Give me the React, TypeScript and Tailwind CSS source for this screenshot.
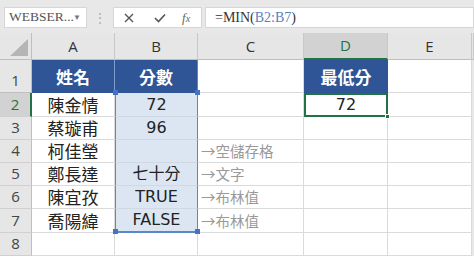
import React from "react";

const CJK = "font-['Noto_Sans_CJK_TC','Noto_Sans',sans-serif]";

const rows = [
  { n: "2", a: "陳金情", b: "72", c: "" },
  { n: "3", a: "蔡璇甫", b: "96", c: "" },
  { n: "4", a: "柯佳瑩", b: "", c: "→空儲存格" },
  { n: "5", a: "鄭長達", b: "七十分", c: "→文字" },
  { n: "6", a: "陳宜孜", b: "TRUE", c: "→布林值" },
  { n: "7", a: "喬陽緯", b: "FALSE", c: "→布林值" },
];

const rowH = ["h-[24px]", "h-[23px]", "h-[23px]", "h-[23px]", "h-[23px]", "h-[24px]"];

function RowHead({ n, active, h }: { n: string; active?: boolean; h: string }) {
  return (
    <div
      className={`${h} flex items-end justify-center pb-[1px] border-b border-[#d0d0d0] text-[15px] font-['Open_Sans',sans-serif] ${
        active ? "bg-[#d2d2d2] text-[#217346] border-r-2 border-r-[#217346]" : "bg-[#e6e6e6] text-[#444] border-r border-r-[#bfbfbf]"
      }`}
    >
      {n}
    </div>
  );
}

export default function App() {
  return (
    <div className="w-[474px] h-[259px] overflow-hidden bg-white">
      {/* formula bar */}
      <div className="h-[33px] bg-[#e8e8e8] flex items-start pt-[7px]">
        <div className="ml-[4px] w-[83px] h-[21px] bg-white border border-[#d6d6d6] flex items-center pl-[4px] relative">
          <span className="text-[13.5px] text-[#555] font-['Liberation_Serif',serif]">WEBSER...</span>
          <span className="absolute right-[5px] top-[3px] text-[8px] text-[#777]">▼</span>
        </div>
        <div className="w-[26px] h-[21px] flex items-center justify-center text-[#aaa] text-[12px]">⋮</div>
        <div className="w-[89px] h-[21px] bg-white border border-[#d6d6d6] flex items-center">
          <svg className="ml-[10px]" width="10" height="10" viewBox="0 0 10 10">
            <path d="M1 1 L9 9 M9 1 L1 9" stroke="#555" strokeWidth="1.4" />
          </svg>
          <svg className="ml-[20px]" width="12" height="10" viewBox="0 0 12 10">
            <path d="M1 5 L4.5 8.5 L11 1.5" stroke="#555" strokeWidth="1.6" fill="none" />
          </svg>
          <span className="ml-[16px] text-[13px] italic text-[#666] font-['Liberation_Serif',serif]">
            f<span className="text-[10px]">x</span>
          </span>
        </div>
        <div className="ml-[3px] flex-1 h-[21px] bg-white border border-[#d6d6d6] flex items-center pl-[9px] text-[14px] font-['Liberation_Serif',serif] text-[#333]">
          =MIN(<span className="text-[#5b7fc0]">B2:B7</span>)
        </div>
      </div>

      {/* sheet grid */}
      <div className="grid grid-cols-[32px_83px_83px_106px_84px_84px_1fr]">
        {/* column headers */}
        <div className="h-[27px] bg-[#e6e6e6] border-r border-b border-[#bfbfbf] relative">
          <svg className="absolute right-[3px] bottom-[3px]" width="18" height="17" viewBox="0 0 18 17">
            <path d="M18 0 L18 17 L0 17 Z" fill="#b5b5b5" />
          </svg>
        </div>
        {["A", "B", "C", "D", "E", ""].map((c) => (
          <div
            key={c || "x"}
            className={`h-[27px] flex items-center justify-center text-[15px] font-['Open_Sans',sans-serif] border-r border-[#c8c8c8] ${
              c === "D"
                ? "bg-[#d2d2d2] text-[#217346] border-b-2 border-b-[#217346]"
                : "bg-[#e6e6e6] text-[#333] border-b border-b-[#bfbfbf]"
            }`}
          >
            {c}
          </div>
        ))}

        {/* row 1 */}
        <div className="h-[33px] flex items-end justify-center pb-[1px] bg-[#e6e6e6] text-[#444] text-[15px] border-r border-b border-[#bfbfbf] font-['Open_Sans',sans-serif]">
          1
        </div>
        <div className={`h-[33px] bg-[#2f5597] border-r border-[#7f9ccd] flex items-center justify-center text-white font-bold text-[17px] ${CJK}`}>
          姓名
        </div>
        <div className={`h-[33px] bg-[#2f5597] border-r border-[#5b87c8] flex items-center justify-center text-white font-bold text-[17px] ${CJK}`}>
          分數
        </div>
        <div className="h-[33px] border-r border-b border-[#dadada]" />
        <div className={`h-[33px] bg-[#2f5597] flex items-center justify-center text-white font-bold text-[17px] ${CJK}`}>
          最低分
        </div>
        <div className="h-[33px] border-r border-b border-[#dadada]" />
        <div className="h-[33px] bg-[#e8e8e8]" />

        {rows.map((r, i) => {
          const h = rowH[i];
          const first = i === 0;
          const last = i === rows.length - 1;
          return (
            <React.Fragment key={r.n}>
              <RowHead n={r.n} active={first} h={h} />
              <div className={`${h} border-r border-b border-[#dadada] flex items-center justify-center text-[17px] text-[#222] ${CJK}`}>
                {r.a}
              </div>
              <div
                className={`${h} relative bg-[#dce6f2] border-x border-x-[#5b87c8] flex items-center justify-center text-[16px] text-[#222] font-['DejaVu_Sans','Noto_Sans_CJK_TC',sans-serif] ${
                  last ? "border-b-2 border-b-[#5b87c8]" : "border-b border-b-[#d0d8e4]"
                }`}
              >
                {r.b}
                {first && (
                  <>
                    <span className="absolute -left-[3px] -top-[3px] w-[5px] h-[5px] bg-[#4472c4]" />
                    <span className="absolute -right-[3px] -top-[3px] w-[5px] h-[5px] bg-[#4472c4]" />
                  </>
                )}
                {last && (
                  <>
                    <span className="absolute -left-[3px] -bottom-[3px] w-[5px] h-[5px] bg-[#4472c4]" />
                    <span className="absolute -right-[3px] -bottom-[3px] w-[5px] h-[5px] bg-[#4472c4]" />
                  </>
                )}
              </div>
              <div className={`${h} border-r border-b border-[#dadada] flex items-center pl-[3px] text-[14.5px] text-[#999] ${CJK}`}>
                {r.c}
              </div>
              {first ? (
                <div className={`${h} relative border-2 border-[#217346] flex items-center justify-center text-[16px] text-[#222] font-['DejaVu_Sans',sans-serif]`}>
                  72
                  <span className="absolute -right-[4px] -bottom-[4px] w-[5px] h-[5px] bg-[#217346] border border-white" />
                </div>
              ) : (
                <div className={`${h} border-r border-b border-[#dadada]`} />
              )}
              <div className={`${h} border-r border-b border-[#dadada]`} />
              <div className={`${h} bg-[#e8e8e8]`} />
            </React.Fragment>
          );
        })}

        {/* row 8 */}
        <RowHead n="8" h="h-[23px]" />
        {[0, 1, 2, 3, 4].map((k) => (
          <div key={k} className="h-[23px] border-r border-b border-[#dadada]" />
        ))}
        <div className="h-[23px] bg-[#e8e8e8]" />
      </div>
    </div>
  );
}
